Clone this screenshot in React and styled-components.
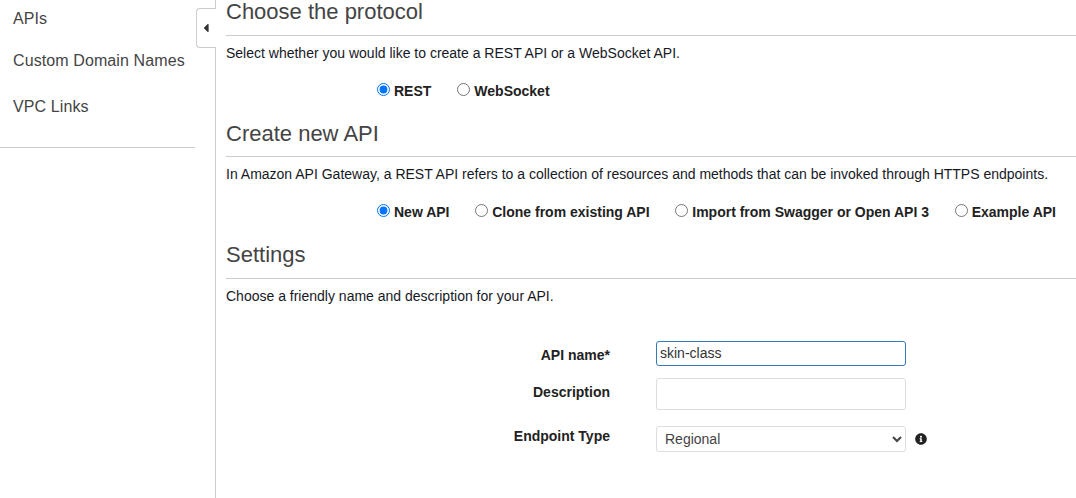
import styled, { createGlobalStyle } from 'styled-components';
import { FaCaretLeft, FaInfoCircle } from 'react-icons/fa';

const GlobalStyle = createGlobalStyle`
  html, body {
    margin: 0;
    padding: 0;
    height: 100%;
    background: #fff;
    overflow: hidden;
  }
  body {
    font-family: "Liberation Sans", Arial, sans-serif;
    color: #16191f;
  }
`;

const sections = [
  {
    title: 'Choose the protocol',
    text: 'Select whether you would like to create a REST API or a WebSocket API.',
    group: 'protocol',
    headingLine: 24,
    gap: 26,
    height: 49,
    options: [
      { label: 'REST', checked: true },
      { label: 'WebSocket' },
    ],
  },
  {
    title: 'Create new API',
    text: 'In Amazon API Gateway, a REST API refers to a collection of resources and methods that can be invoked through HTTPS endpoints.',
    group: 'source',
    headingLine: 26,
    gap: 25.7,
    height: 50,
    options: [
      { label: 'New API', checked: true },
      { label: 'Clone from existing API' },
      { label: 'Import from Swagger or Open API 3' },
      { label: 'Example API' },
    ],
  },
];

const App = () => {
  return (
    <Page>
      <GlobalStyle />
      <Sidebar>
        <NavList>
          <NavItem $height={38}>APIs</NavItem>
          <NavItem $height={46}>Custom Domain Names</NavItem>
          <NavItem $height={46}>VPC Links</NavItem>
        </NavList>
        <Divider />
        <Collapse aria-label="Collapse sidebar">
          <FaCaretLeft size={14} />
        </Collapse>
      </Sidebar>
      <Main>
        {sections.map((s) => (
          <Section key={s.group}>
            <Heading $line={s.headingLine}>{s.title}</Heading>
            <Description>{s.text}</Description>
            <RadioRow $gap={s.gap} $height={s.height}>
              {s.options.map((o) => (
                <RadioLabel key={o.label}>
                  <Radio type="radio" name={s.group} defaultChecked={o.checked} />
                  {o.label}
                </RadioLabel>
              ))}
            </RadioRow>
          </Section>
        ))}
        <Section>
          <Heading $line={24}>Settings</Heading>
          <Description>Choose a friendly name and description for your API.</Description>
          <Form>
            <FieldLabel $bottom={3}>API name*</FieldLabel>
            <NameInput defaultValue="skin-class" />
            <span />
            <FieldLabel $bottom={10}>Description</FieldLabel>
            <TextInput />
            <span />
            <FieldLabel $bottom={8}>Endpoint Type</FieldLabel>
            <SelectBox defaultValue="Regional">
              <option>Regional</option>
              <option>Edge optimized</option>
              <option>Private</option>
            </SelectBox>
            <InfoIcon>
              <FaInfoCircle size={12} />
            </InfoIcon>
          </Form>
        </Section>
      </Main>
    </Page>
  );
};

export default App;

const Page = styled.div`
  display: flex;
  width: 1076px;
  height: 498px;
  overflow: hidden;
`;
const Sidebar = styled.aside`
  position: relative;
  flex: 0 0 216px;
  box-sizing: border-box;
  border-right: 1px solid #ccc;
  padding-right: 20px;
`;
const NavList = styled.nav`
  display: flex;
  flex-direction: column;
`;
const NavItem = styled.a`
  display: flex;
  align-items: center;
  height: ${(p) => p.$height}px;
  padding-left: 13px;
  font-size: 16px;
  letter-spacing: 0.1px;
  color: #444;
`;
const Divider = styled.hr`
  margin: 17px 0 0;
  border: 0;
  border-top: 1px solid #ccc;
`;
const Collapse = styled.button`
  position: absolute;
  top: 8px;
  right: -1px;
  width: 20px;
  height: 40px;
  padding: 0 2px 0 0;
  display: flex;
  align-items: center;
  justify-content: center;
  box-sizing: border-box;
  background: #fff;
  color: #333;
  border: 1px solid #ccc;
  border-right: 0;
  border-radius: 4px 0 0 4px;
`;
const Main = styled.main`
  flex: 1;
  box-sizing: border-box;
  padding: 0 0 0 10px;
  display: flex;
  flex-direction: column;
`;
const Section = styled.section`
  display: flex;
  flex-direction: column;
`;
const Heading = styled.h2`
  margin: 0;
  height: 36px;
  box-sizing: border-box;
  border-bottom: 1px solid #ccc;
  font-size: 22px;
  font-weight: 400;
  line-height: ${(p) => p.$line}px;
  color: #444;
`;
const Description = styled.p`
  margin: 0;
  height: 36px;
  font-size: 14px;
  line-height: 35px;
  color: #16191f;
`;
const RadioRow = styled.div`
  display: flex;
  align-items: center;
  gap: ${(p) => p.$gap}px;
  box-sizing: border-box;
  height: ${(p) => p.$height}px;
  padding: 0 0 ${(p) => p.$height - 38}px 151px;
`;
const RadioLabel = styled.label`
  display: flex;
  align-items: center;
  gap: 4px;
  font-size: 14px;
  font-weight: 700;
  color: #222;
`;
const Radio = styled.input`
  width: 13px;
  height: 13px;
  margin: 0 0 4px;
  accent-color: #0075ff;
`;
const Form = styled.div`
  display: grid;
  grid-template-columns: 384px 250px auto;
  grid-template-rows: 25px 44px 42px;
  column-gap: 46px;
  margin-top: 26px;
  align-items: end;
`;
const FieldLabel = styled.label`
  justify-self: end;
  margin-bottom: ${(p) => p.$bottom}px;
  font-size: 14px;
  font-weight: 700;
  color: #222;
`;
const TextInput = styled.input`
  width: 250px;
  height: 32px;
  box-sizing: border-box;
  padding: 0 3px;
  border: 1px solid #ddd;
  border-radius: 3px;
  font-family: inherit;
  font-size: 14px;
  color: #333;
  outline: none;
`;
const NameInput = styled(TextInput)`
  height: 25px;
  padding-bottom: 2px;
  border-color: #337ab7;
`;
const SelectBox = styled.select`
  width: 250px;
  height: 26px;
  box-sizing: border-box;
  padding: 0 4px;
  border: 1px solid #ddd;
  border-radius: 3px;
  background: #fff;
  font-family: inherit;
  font-size: 14px;
  color: #444;
`;
const InfoIcon = styled.span`
  display: flex;
  margin: 0 0 7px -37px;
  color: #222;
`;
